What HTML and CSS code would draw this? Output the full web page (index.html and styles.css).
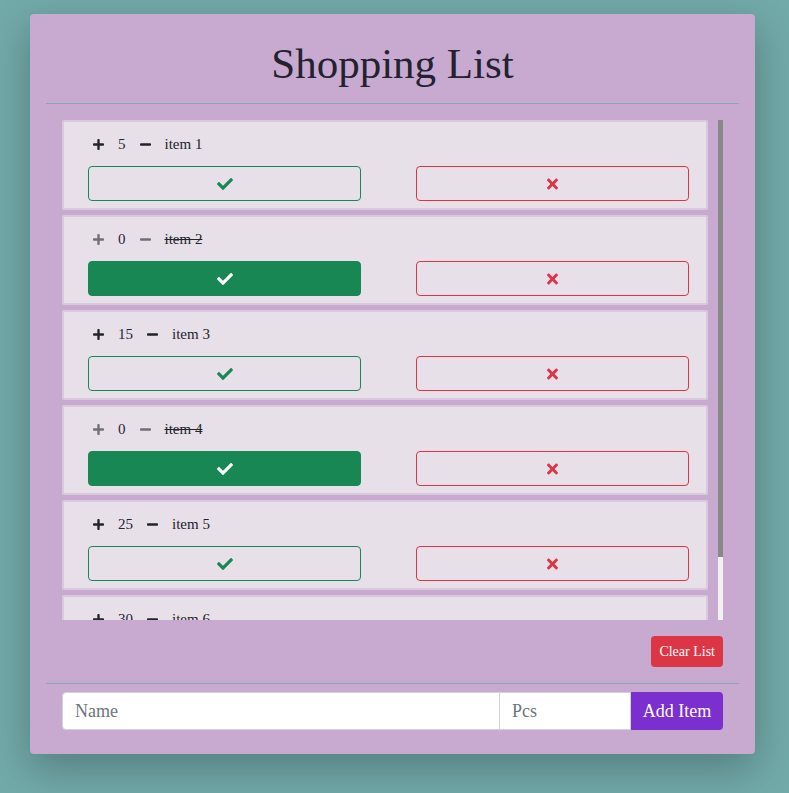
FILE: index.html
```html
<!DOCTYPE html>
<html lang="en">
<head>
<meta charset="utf-8">
<title>Shopping List</title>
<link rel="stylesheet" href="styles.css">
</head>
<body>
<div class="card">
  <header class="card-header">
    <h1 class="title">Shopping List</h1>
  </header>
  <div class="card-body">
    <div class="list-wrap">
    <div class="list">
      <div class="item">
        <div class="controls">
          <span class="ico"><svg viewBox="0 0 448 512"><path d="M416 208H272V64c0-17.67-14.330-32-32-32h-32c-17.670 0-32 14.330-32 32v144H32c-17.670 0-32 14.330-32 32v32c0 17.670 14.330 32 32 32h144v144c0 17.670 14.330 32 32 32h32c17.670 0 32-14.330 32-32V304h144c17.670 0 32-14.330 32-32v-32c0-17.670-14.330-32-32-32z"/></svg></span>
          <span class="count">5</span>
          <span class="ico"><svg viewBox="0 0 448 512"><path d="M416 208H32c-17.670 0-32 14.330-32 32v32c0 17.670 14.330 32 32 32h384c17.670 0 32-14.330 32-32v-32c0-17.670-14.330-32-32-32z"/></svg></span>
          <span class="name">item 1</span>
        </div>
        <div class="actions">
          <button class="btn ok"><svg viewBox="0 0 512 512"><path d="M173.898 439.404l-166.4-166.4c-9.997-9.997-9.997-26.206 0-36.204l36.203-36.204c9.997-9.998 26.207-9.998 36.204 0L192 312.69 432.095 72.596c9.997-9.997 26.207-9.997 36.204 0l36.203 36.204c9.997 9.997 9.997 26.206 0 36.204l-294.4 294.401c-9.998 9.997-26.207 9.997-36.204-.001z"/></svg></button>
          <button class="btn del"><svg viewBox="0 0 352 512"><path d="M242.72 256l100.07-100.07c12.28-12.28 12.28-32.19 0-44.48l-22.24-22.24c-12.28-12.28-32.19-12.28-44.48 0L176 189.28 75.93 89.21c-12.28-12.28-32.19-12.28-44.48 0L9.21 111.45c-12.28 12.28-12.28 32.19 0 44.48L109.28 256 9.21 356.07c-12.280 12.280-12.280 32.190 0 44.480l22.240 22.240c12.280 12.280 32.200 12.280 44.480 0L176 322.72l100.07 100.07c12.280 12.280 32.200 12.280 44.480 0l22.240-22.240c12.280-12.280 12.280-32.190 0-44.480L242.72 256z"/></svg></button>
        </div>
      </div>
      <div class="item done">
        <div class="controls">
          <span class="ico"><svg viewBox="0 0 448 512"><path d="M416 208H272V64c0-17.67-14.330-32-32-32h-32c-17.670 0-32 14.330-32 32v144H32c-17.670 0-32 14.330-32 32v32c0 17.670 14.330 32 32 32h144v144c0 17.670 14.330 32 32 32h32c17.670 0 32-14.330 32-32V304h144c17.670 0 32-14.330 32-32v-32c0-17.670-14.330-32-32-32z"/></svg></span>
          <span class="count">0</span>
          <span class="ico"><svg viewBox="0 0 448 512"><path d="M416 208H32c-17.670 0-32 14.330-32 32v32c0 17.670 14.330 32 32 32h384c17.670 0 32-14.330 32-32v-32c0-17.670-14.330-32-32-32z"/></svg></span>
          <span class="name">item 2</span>
        </div>
        <div class="actions">
          <button class="btn ok"><svg viewBox="0 0 512 512"><path d="M173.898 439.404l-166.4-166.4c-9.997-9.997-9.997-26.206 0-36.204l36.203-36.204c9.997-9.998 26.207-9.998 36.204 0L192 312.69 432.095 72.596c9.997-9.997 26.207-9.997 36.204 0l36.203 36.204c9.997 9.997 9.997 26.206 0 36.204l-294.4 294.401c-9.998 9.997-26.207 9.997-36.204-.001z"/></svg></button>
          <button class="btn del"><svg viewBox="0 0 352 512"><path d="M242.72 256l100.07-100.07c12.28-12.28 12.28-32.19 0-44.48l-22.24-22.24c-12.28-12.28-32.19-12.28-44.48 0L176 189.28 75.93 89.21c-12.28-12.28-32.19-12.28-44.48 0L9.21 111.45c-12.28 12.28-12.28 32.19 0 44.48L109.28 256 9.21 356.07c-12.280 12.280-12.280 32.190 0 44.480l22.240 22.240c12.280 12.280 32.200 12.280 44.480 0L176 322.72l100.07 100.07c12.280 12.280 32.200 12.280 44.480 0l22.240-22.240c12.280-12.280 12.280-32.190 0-44.480L242.72 256z"/></svg></button>
        </div>
      </div>
      <div class="item">
        <div class="controls">
          <span class="ico"><svg viewBox="0 0 448 512"><path d="M416 208H272V64c0-17.67-14.330-32-32-32h-32c-17.670 0-32 14.330-32 32v144H32c-17.670 0-32 14.330-32 32v32c0 17.670 14.330 32 32 32h144v144c0 17.670 14.330 32 32 32h32c17.670 0 32-14.330 32-32V304h144c17.670 0 32-14.330 32-32v-32c0-17.670-14.330-32-32-32z"/></svg></span>
          <span class="count">15</span>
          <span class="ico"><svg viewBox="0 0 448 512"><path d="M416 208H32c-17.670 0-32 14.330-32 32v32c0 17.670 14.330 32 32 32h384c17.670 0 32-14.330 32-32v-32c0-17.670-14.330-32-32-32z"/></svg></span>
          <span class="name">item 3</span>
        </div>
        <div class="actions">
          <button class="btn ok"><svg viewBox="0 0 512 512"><path d="M173.898 439.404l-166.4-166.4c-9.997-9.997-9.997-26.206 0-36.204l36.203-36.204c9.997-9.998 26.207-9.998 36.204 0L192 312.69 432.095 72.596c9.997-9.997 26.207-9.997 36.204 0l36.203 36.204c9.997 9.997 9.997 26.206 0 36.204l-294.4 294.401c-9.998 9.997-26.207 9.997-36.204-.001z"/></svg></button>
          <button class="btn del"><svg viewBox="0 0 352 512"><path d="M242.72 256l100.07-100.07c12.28-12.28 12.28-32.19 0-44.48l-22.24-22.24c-12.28-12.28-32.19-12.28-44.48 0L176 189.28 75.93 89.21c-12.28-12.28-32.19-12.28-44.48 0L9.21 111.45c-12.28 12.28-12.28 32.19 0 44.48L109.28 256 9.21 356.07c-12.280 12.280-12.280 32.190 0 44.480l22.240 22.240c12.280 12.280 32.200 12.280 44.480 0L176 322.72l100.07 100.07c12.280 12.280 32.200 12.280 44.480 0l22.240-22.240c12.280-12.280 12.280-32.190 0-44.480L242.72 256z"/></svg></button>
        </div>
      </div>
      <div class="item done">
        <div class="controls">
          <span class="ico"><svg viewBox="0 0 448 512"><path d="M416 208H272V64c0-17.67-14.330-32-32-32h-32c-17.670 0-32 14.330-32 32v144H32c-17.670 0-32 14.330-32 32v32c0 17.670 14.330 32 32 32h144v144c0 17.670 14.330 32 32 32h32c17.670 0 32-14.330 32-32V304h144c17.670 0 32-14.330 32-32v-32c0-17.670-14.330-32-32-32z"/></svg></span>
          <span class="count">0</span>
          <span class="ico"><svg viewBox="0 0 448 512"><path d="M416 208H32c-17.670 0-32 14.330-32 32v32c0 17.670 14.330 32 32 32h384c17.670 0 32-14.330 32-32v-32c0-17.670-14.330-32-32-32z"/></svg></span>
          <span class="name">item 4</span>
        </div>
        <div class="actions">
          <button class="btn ok"><svg viewBox="0 0 512 512"><path d="M173.898 439.404l-166.4-166.4c-9.997-9.997-9.997-26.206 0-36.204l36.203-36.204c9.997-9.998 26.207-9.998 36.204 0L192 312.69 432.095 72.596c9.997-9.997 26.207-9.997 36.204 0l36.203 36.204c9.997 9.997 9.997 26.206 0 36.204l-294.4 294.401c-9.998 9.997-26.207 9.997-36.204-.001z"/></svg></button>
          <button class="btn del"><svg viewBox="0 0 352 512"><path d="M242.72 256l100.07-100.07c12.28-12.28 12.28-32.19 0-44.48l-22.24-22.24c-12.28-12.28-32.19-12.28-44.48 0L176 189.28 75.93 89.21c-12.28-12.28-32.19-12.28-44.48 0L9.21 111.45c-12.28 12.28-12.28 32.19 0 44.48L109.28 256 9.21 356.07c-12.280 12.280-12.280 32.190 0 44.480l22.240 22.240c12.280 12.280 32.200 12.280 44.480 0L176 322.72l100.07 100.07c12.280 12.280 32.200 12.280 44.480 0l22.240-22.240c12.280-12.280 12.280-32.190 0-44.480L242.72 256z"/></svg></button>
        </div>
      </div>
      <div class="item">
        <div class="controls">
          <span class="ico"><svg viewBox="0 0 448 512"><path d="M416 208H272V64c0-17.67-14.330-32-32-32h-32c-17.670 0-32 14.330-32 32v144H32c-17.670 0-32 14.330-32 32v32c0 17.670 14.330 32 32 32h144v144c0 17.670 14.330 32 32 32h32c17.670 0 32-14.330 32-32V304h144c17.670 0 32-14.330 32-32v-32c0-17.670-14.330-32-32-32z"/></svg></span>
          <span class="count">25</span>
          <span class="ico"><svg viewBox="0 0 448 512"><path d="M416 208H32c-17.670 0-32 14.330-32 32v32c0 17.670 14.330 32 32 32h384c17.670 0 32-14.330 32-32v-32c0-17.670-14.330-32-32-32z"/></svg></span>
          <span class="name">item 5</span>
        </div>
        <div class="actions">
          <button class="btn ok"><svg viewBox="0 0 512 512"><path d="M173.898 439.404l-166.4-166.4c-9.997-9.997-9.997-26.206 0-36.204l36.203-36.204c9.997-9.998 26.207-9.998 36.204 0L192 312.69 432.095 72.596c9.997-9.997 26.207-9.997 36.204 0l36.203 36.204c9.997 9.997 9.997 26.206 0 36.204l-294.4 294.401c-9.998 9.997-26.207 9.997-36.204-.001z"/></svg></button>
          <button class="btn del"><svg viewBox="0 0 352 512"><path d="M242.72 256l100.07-100.07c12.28-12.28 12.28-32.19 0-44.48l-22.24-22.24c-12.28-12.28-32.19-12.28-44.48 0L176 189.28 75.93 89.21c-12.28-12.28-32.19-12.28-44.48 0L9.21 111.45c-12.28 12.28-12.28 32.19 0 44.48L109.28 256 9.21 356.07c-12.280 12.280-12.280 32.190 0 44.480l22.240 22.240c12.280 12.280 32.200 12.280 44.480 0L176 322.72l100.07 100.07c12.280 12.280 32.200 12.280 44.480 0l22.240-22.240c12.280-12.280 12.280-32.190 0-44.480L242.72 256z"/></svg></button>
        </div>
      </div>
      <div class="item">
        <div class="controls">
          <span class="ico"><svg viewBox="0 0 448 512"><path d="M416 208H272V64c0-17.67-14.330-32-32-32h-32c-17.670 0-32 14.330-32 32v144H32c-17.670 0-32 14.330-32 32v32c0 17.670 14.330 32 32 32h144v144c0 17.670 14.330 32 32 32h32c17.670 0 32-14.330 32-32V304h144c17.670 0 32-14.330 32-32v-32c0-17.670-14.330-32-32-32z"/></svg></span>
          <span class="count">30</span>
          <span class="ico"><svg viewBox="0 0 448 512"><path d="M416 208H32c-17.670 0-32 14.330-32 32v32c0 17.670 14.330 32 32 32h384c17.670 0 32-14.330 32-32v-32c0-17.670-14.330-32-32-32z"/></svg></span>
          <span class="name">item 6</span>
        </div>
        <div class="actions">
          <button class="btn ok"><svg viewBox="0 0 512 512"><path d="M173.898 439.404l-166.4-166.4c-9.997-9.997-9.997-26.206 0-36.204l36.203-36.204c9.997-9.998 26.207-9.998 36.204 0L192 312.69 432.095 72.596c9.997-9.997 26.207-9.997 36.204 0l36.203 36.204c9.997 9.997 9.997 26.206 0 36.204l-294.4 294.401c-9.998 9.997-26.207 9.997-36.204-.001z"/></svg></button>
          <button class="btn del"><svg viewBox="0 0 352 512"><path d="M242.72 256l100.07-100.07c12.28-12.28 12.28-32.19 0-44.48l-22.24-22.24c-12.28-12.28-32.19-12.28-44.48 0L176 189.28 75.93 89.21c-12.28-12.28-32.19-12.28-44.48 0L9.21 111.45c-12.28 12.28-12.28 32.19 0 44.48L109.28 256 9.21 356.07c-12.280 12.280-12.280 32.190 0 44.480l22.240 22.240c12.280 12.280 32.200 12.280 44.480 0L176 322.72l100.07 100.07c12.280 12.280 32.200 12.280 44.480 0l22.240-22.240c12.280-12.280 12.280-32.190 0-44.480L242.72 256z"/></svg></button>
        </div>
      </div>
    </div>
    <div class="scrollbar"><div class="thumb"></div></div>
    </div>
    <div class="clear-row">
      <button class="clear-btn">Clear List</button>
    </div>
  </div>
  <div class="card-footer">
    <div class="input-group">
      <input class="in name-in" type="text" placeholder="Name">
      <input class="in pcs-in" type="text" placeholder="Pcs">
      <button class="add-btn">Add Item</button>
    </div>
  </div>
</div>
</body>
</html>
```

FILE: styles.css
```css
html, body {
  margin: 0;
  padding: 0;
}
body {
  background: #72a9a9;
  font-family: "Liberation Serif", "Times New Roman", serif;
  color: #212529;
  min-height: 793px;
}
.card {
  width: 725px;
  height: 740px;
  box-sizing: border-box;
  margin: 14px 0 0 30px;
  background: #c8aad0;
  border-radius: 4px;
  box-shadow: 0 14px 40px rgba(0, 0, 0, 0.26);
  padding: 0 16px;
  display: flex;
  flex-direction: column;
}
.card-header {
  height: 89px;
  border-bottom: 1px solid #86a8b0;
  display: flex;
  align-items: center;
  justify-content: center;
}
.title {
  margin: 10px 0 0 0;
  font-weight: 400;
  font-size: 43px;
  line-height: 50px;
  color: #222230;
}
.card-body {
  padding: 16px 0 0 16px;
}
.list-wrap {
  display: flex;
  width: 661px;
  height: 500px;
}
.list {
  flex: 1;
  height: 500px;
  overflow: hidden;
}
.scrollbar {
  width: 5px;
  height: 500px;
  background: #f1f1f1;
}
.thumb {
  height: 437px;
  background: #888;
}
.item {
  width: 646px;
  height: 90px;
  box-sizing: border-box;
  margin-bottom: 5px;
  background: #e8e0e9;
  border: 2px solid #dac9de;
  border-radius: 2px;
  padding: 11px 0 0 24px;
}
.controls {
  display: flex;
  align-items: center;
  height: 22px;
  padding-left: 5px;
  font-size: 15px;
  gap: 14px;
}
.ico {
  display: inline-flex;
  width: 11px;
  height: 13px;
}
.ico svg {
  width: 11px;
  height: 13px;
  fill: #212529;
}
.count {
  color: #24243c;
}
.done .ico svg {
  fill: #6f6f74;
}
.done .name {
  text-decoration: line-through;
}
.actions {
  display: grid;
  grid-template-columns: 273px 273px;
  column-gap: 55px;
  margin-top: 11px;
}
.btn {
  height: 35px;
  box-sizing: border-box;
  background: transparent;
  border-radius: 4px;
  display: flex;
  align-items: center;
  justify-content: center;
  padding: 0;
  cursor: pointer;
}
.btn svg {
  width: 16px;
  height: 16px;
}
.btn.ok {
  border: 1px solid #198754;
}
.btn.ok svg {
  fill: #198754;
}
.done .btn.ok {
  background: #198754;
}
.done .btn.ok svg {
  fill: #ffffff;
}
.btn.del {
  border: 1px solid #dc3545;
}
.btn.del svg {
  width: 11px;
  height: 16px;
  fill: #dc3545;
}
.clear-row {
  display: flex;
  justify-content: flex-end;
  width: 661px;
  padding: 16px 0;
}
.clear-btn {
  height: 31px;
  padding: 0 8px;
  background: #dc3545;
  color: #fff;
  border: none;
  border-radius: 4px;
  font-family: "Liberation Serif", "Times New Roman", serif;
  font-size: 14px;
}
.card-footer {
  border-top: 1px solid #86a8b0;
  padding: 8px 0 0 16px;
}
.input-group {
  display: flex;
  width: 661px;
  height: 38px;
}
.in {
  box-sizing: border-box;
  height: 38px;
  border: 1px solid #ced4da;
  background: #fff;
  font-family: "Liberation Serif", "Times New Roman", serif;
  font-size: 18px;
  padding: 0 12px;
  color: #212529;
  outline: none;
}
.in::placeholder {
  color: #6c757d;
}
.name-in {
  flex: 1;
  min-width: 0;
  border-radius: 4px 0 0 4px;
}
.pcs-in {
  width: 132px;
  border-left: 1px solid #ced4da;
  margin-left: -1px;
}
.add-btn {
  width: 92px;
  height: 38px;
  background: #7b2fce;
  color: #fff;
  border: none;
  border-radius: 0 4px 4px 0;
  font-family: "Liberation Serif", "Times New Roman", serif;
  font-size: 18px;
  padding: 0;
}
```
